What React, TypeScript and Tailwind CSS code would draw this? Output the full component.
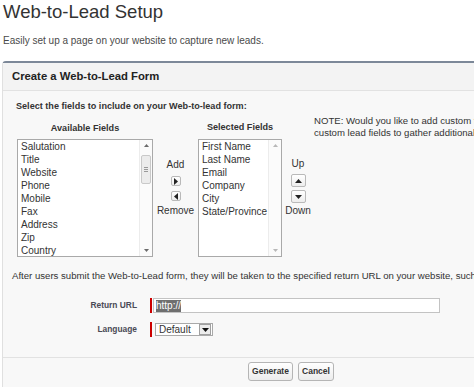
import React from "react";

const available = ["Salutation", "Title", "Website", "Phone", "Mobile", "Fax", "Address", "Zip", "Country"];
const selected = ["First Name", "Last Name", "Email", "Company", "City", "State/Province"];

function Tri({ dir, color = "#222" }: { dir: "up" | "down" | "left" | "right"; color?: string }) {
  const pts = {
    up: "0,4 3.5,0 7,4",
    down: "0,0 7,0 3.5,4",
    left: "4,0 4,7 0,3.5",
    right: "0,0 4,3.5 0,7",
  }[dir];
  const w = dir === "up" || dir === "down" ? 7 : 4;
  const h = dir === "up" || dir === "down" ? 4 : 7;
  return (
    <svg width={w} height={h} viewBox={`0 0 ${w} ${h}`}>
      <polygon points={pts} fill={color} />
    </svg>
  );
}

function Scrollbar({ thumb }: { thumb: boolean }) {
  const c = thumb ? "#6b6b6b" : "#b8b8b8";
  return (
    <div className="flex w-[13px] flex-col items-center border-l border-[#ececec] bg-[#fbfbfb]">
      <div className="flex h-[11px] items-center justify-center">
        <svg width="5" height="3" viewBox="0 0 5 3">
          <polygon points="0,3 2.5,0 5,3" fill={c} />
        </svg>
      </div>
      {thumb && (
        <div className="mt-[4px] flex h-[29px] w-[10px] flex-col items-center justify-center gap-[1px] rounded-[2px] border border-[#c9c9c9] bg-[#ececec]">
          <div className="h-px w-[4px] bg-[#999]" />
          <div className="h-px w-[4px] bg-[#999]" />
          <div className="h-px w-[4px] bg-[#999]" />
        </div>
      )}
      <div className="flex-1" />
      <div className="flex h-[11px] items-center justify-center">
        <svg width="5" height="3" viewBox="0 0 5 3">
          <polygon points="0,0 5,0 2.5,3" fill={c} />
        </svg>
      </div>
    </div>
  );
}

function ListBox({ items, width, thumb }: { items: string[]; width: string; thumb: boolean }) {
  return (
    <div className={`flex h-[118px] ${width} border border-[#a9a9a9] bg-white`}>
      <div className="flex-1 overflow-hidden pl-[3px] text-[10px] leading-[13px] text-[#333]">
        {items.map((i) => (
          <div key={i} className="whitespace-nowrap">
            {i}
          </div>
        ))}
      </div>
      <Scrollbar thumb={thumb} />
    </div>
  );
}

function SmallBtn({ children, cls }: { children: React.ReactNode; cls: string }) {
  return (
    <div
      className={`flex ${cls} items-center justify-center rounded-[2px] border border-[#b9b9b9] bg-gradient-to-b from-white to-[#ededed]`}
    >
      {children}
    </div>
  );
}

export default function App() {
  return (
    <div
      className="h-[387px] w-[474px] overflow-hidden bg-white text-[#333]"
      style={{ fontFamily: '"Liberation Sans", Arial, sans-serif' }}
    >
      <div className="pl-[3px] pt-[1px]">
        <h1 className="whitespace-nowrap text-[18.5px] leading-[21px] text-[#333]">Web-to-Lead Setup</h1>
        <p className="mt-[13px] whitespace-nowrap text-[10px] leading-[12px] text-[#4a4a4a]">
          Easily set up a page on your website to capture new leads.
        </p>
      </div>

      <div className="ml-[2px] mt-[14px] w-[620px] rounded-tl-[4px] border-l border-t-2 border-l-[#e0e0e0] border-t-[#7c8898] bg-[#f8f8f8]">
        <div className="flex h-[28px] items-center border-b border-[#e2e2e2] bg-[#f3f3f3] pl-[9px]">
          <span className="text-[11.3px] font-bold text-[#222]">Create a Web-to-Lead Form</span>
        </div>

        <div className="pt-[9px]">
          <p className="pl-[13px] text-[9.1px] font-bold leading-[12px] text-[#333]">
            Select the fields to include on your Web-to-lead form:
          </p>

          <div className="flex items-start pl-[14px]">
            <div className="flex flex-col">
              <div className="mt-[10px] text-center text-[9.1px] font-bold leading-[12px]">Available Fields</div>
              <div className="mt-[5px]">
                <ListBox items={available} width="w-[136px]" thumb />
              </div>
            </div>

            <div className="flex w-[45px] flex-col items-center text-[10px] leading-[12px]">
              <div className="mt-[47px]">Add</div>
              <SmallBtn cls="mt-[5px] h-[10px] w-[10px]">
                <Tri dir="right" />
              </SmallBtn>
              <SmallBtn cls="mt-[5px] h-[10px] w-[10px]">
                <Tri dir="left" />
              </SmallBtn>
              <div className="mt-[4px]">Remove</div>
            </div>

            <div className="flex flex-col">
              <div className="mt-[9px] text-center text-[9.1px] font-bold leading-[12px]">Selected Fields</div>
              <div className="mt-[6px]">
                <ListBox items={selected} width="w-[84px]" thumb={false} />
              </div>
            </div>

            <div className="flex w-[32px] flex-col items-center text-[10px] leading-[12px]">
              <div className="mt-[46px]">Up</div>
              <SmallBtn cls="mt-[4px] h-[13px] w-[15px]">
                <Tri dir="up" />
              </SmallBtn>
              <SmallBtn cls="mt-[3px] h-[13px] w-[15px]">
                <Tri dir="down" />
              </SmallBtn>
              <div className="mt-[2px]">Down</div>
            </div>

            <div className="mt-[3px] text-[9.6px] leading-[12px] text-[#333]">
              <div className="whitespace-nowrap">NOTE: Would you like to add custom fields to your form? First create</div>
              <div className="whitespace-nowrap">custom lead fields to gather additional information.</div>
            </div>
          </div>

          <p className="mt-[13px] whitespace-nowrap pl-[9px] text-[9.6px] leading-[12px] text-[#333]">
            After users submit the Web-to-Lead form, they will be taken to the specified return URL on your website, such as a "Thank You" page.
          </p>

          <div className="mt-[16px] flex items-center">
            <div className="w-[134px] text-right text-[8.4px] font-bold text-[#4a4a56]">Return URL</div>
            <div className="ml-[13px] flex h-[15px] items-stretch">
              <div className="w-[2px] bg-[#c00]" />
              <div className="ml-[1px] flex w-[287px] items-center border border-[#c3c3c3] bg-white pl-[2px]">
                <span className="bg-[#6f6f6f] text-[10px] leading-[12px] text-white">http://</span>
              </div>
            </div>
          </div>

          <div className="mt-[9px] flex items-center">
            <div className="w-[134px] text-right text-[8.4px] font-bold text-[#4a4a56]">Language</div>
            <div className="ml-[13px] flex h-[15px] items-stretch">
              <div className="w-[2px] bg-[#c00]" />
              <div className="my-[1px] ml-[3px] flex w-[58px] items-center justify-between border border-[#a9a9a9] bg-white pl-[3px] pr-px">
                <span className="text-[10px] leading-[12px]">Default</span>
                <div className="flex h-[11px] w-[12px] items-center justify-center border border-[#a0a0a0] bg-[#ececec]">
                  <Tri dir="down" color="#111" />
                </div>
              </div>
            </div>
          </div>

          <div className="mt-[20px] flex gap-[5px] border-t border-[#e2e2e2] pl-[245px] pt-[4px] pb-[6px]">
            <div className="flex h-[19px] w-[45px] items-center justify-center rounded-[3px] border border-[#b5b5b5] bg-gradient-to-b from-white to-[#ececec] text-[8.5px] font-bold text-[#333]">
              Generate
            </div>
            <div className="flex h-[19px] w-[36px] items-center justify-center rounded-[3px] border border-[#b5b5b5] bg-gradient-to-b from-white to-[#ececec] text-[8.5px] font-bold text-[#333]">
              Cancel
            </div>
          </div>
        </div>
      </div>
    </div>
  );
}
